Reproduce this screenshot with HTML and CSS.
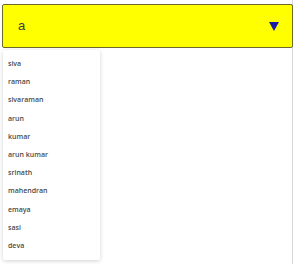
FILE: index.html
```html
<!DOCTYPE html>
<html>
<head>
<meta charset="utf-8">
<link rel="stylesheet" href="styles.css">
</head>
<body>
<div class="page">
  <div class="select">
    <span class="value">a</span>
    <svg class="arrow" width="10" height="9" viewBox="0 0 10 9"><polygon points="0,0 10,0 5,9" fill="#1a1aa8"/></svg>
  </div>
  <ul class="menu">
    <li>siva</li>
    <li>raman</li>
    <li>sivaraman</li>
    <li>arun</li>
    <li>kumar</li>
    <li>arun kumar</li>
    <li>srinath</li>
    <li>mahendran</li>
    <li>emaya</li>
    <li>sasi</li>
    <li>deva</li>
  </ul>
</div>
</body>
</html>
```
FILE: styles.css
```css
html, body {
  margin: 0;
  padding: 0;
  background: #fff;
}
body {
  font-family: "Open Sans", "Liberation Sans", sans-serif;
}
.page {
  width: 293px;
  height: 264px;
  border-right: 1px solid #d6d6d6;
  padding: 4px 0 0 2px;
  box-sizing: border-box;
}
.select {
  height: 44px;
  box-sizing: border-box;
  background: #ffff00;
  border: 1px solid #6b6a2a;
  border-radius: 2px;
  display: flex;
  align-items: center;
  justify-content: space-between;
  padding: 0 13px 0 15px;
  margin-right: -1px;
}
.value {
  font-size: 13px;
  color: #3a3a3a;
  font-family: "Liberation Sans", sans-serif;
  margin-top: -1px;
}
.arrow {
  display: block;
}
.menu {
  list-style: none;
  margin: 2px 0 0 1px;
  padding: 5px 0 5px;
  width: 97px;
  background: #fff;
  box-shadow: 0 1px 4px rgba(0,0,0,0.18);
  border-radius: 2px;
}
.menu li {
  font-size: 7px;
  font-weight: 600;
  color: #4a4a4a;
  line-height: 18.2px;
  padding-left: 5px;
}
```
